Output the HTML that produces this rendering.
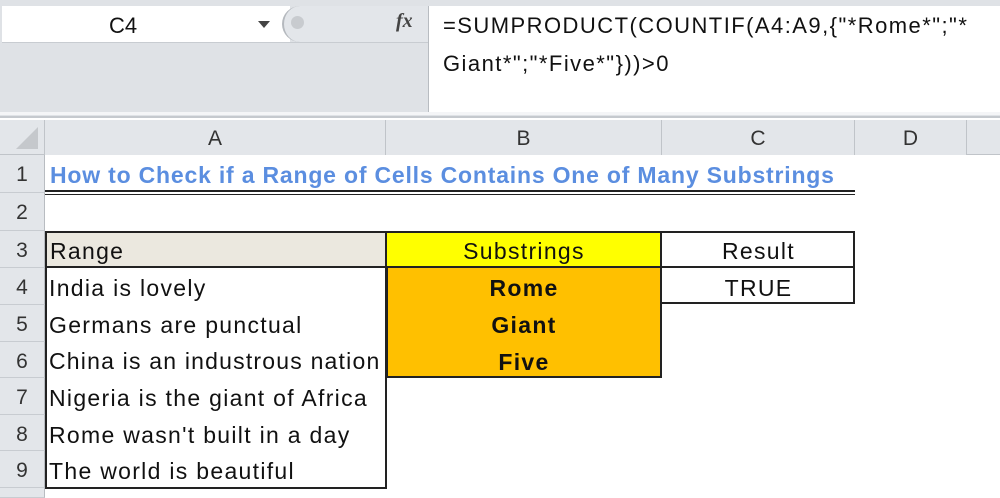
<!DOCTYPE html><html><head><style>
body{margin:0;width:1000px;height:494px;background:#fff;position:relative;overflow:hidden;font-family:"Liberation Sans",sans-serif;color:#111}
div{position:absolute;box-sizing:border-box}
.rh{left:0;width:45px;background:#e3e6ea;border-bottom:1px solid #c8ccd1;border-right:1px solid #b8bcc1;text-align:center;font-size:21px;color:#333;line-height:40px}
.ch{top:120px;height:35px;background:#e3e6ea;border-right:1px solid #c0c4c9;text-align:center;font-size:21px;color:#333;line-height:37px}
.t{font-size:23px;line-height:40px;white-space:nowrap;letter-spacing:1.3px}
</style></head><body>
<div style="left:0;top:0;width:1000px;height:118px;background:#dfe2e6;border-bottom:2px solid #c5c9ce"></div>
<div style="left:0;top:112px;width:1000px;height:3px;background:#f4f5f7"></div>
<div style="left:2px;top:6px;width:288px;height:36px;background:#fff"></div>
<div style="left:98px;top:6px;width:50px;height:36px;font-size:22px;line-height:40px;text-align:center">C4</div>
<div style="left:258px;top:21px;width:0;height:0;border-left:6px solid transparent;border-right:6px solid transparent;border-top:7px solid #444"></div>
<div style="left:282px;top:6px;width:146px;height:36px;background:#e3e6ea;border-radius:18px 0 0 18px;border-left:2px solid #b5b9be"></div>
<div style="left:291px;top:16px;width:13px;height:13px;border-radius:50%;background:#c8cbcf"></div>
<div style="left:396px;top:10px;font-family:'Liberation Serif',serif;font-style:italic;font-weight:bold;font-size:20px;color:#444">fx</div>
<div style="left:2px;top:42px;width:426px;height:70px;border-top:1px solid #c8ccd1"></div>
<div style="left:428px;top:6px;width:572px;height:106px;background:#fff;border-left:1px solid #b8bcc1"></div>
<div style="left:443px;top:7px;font-size:22px;line-height:38px;color:#111;letter-spacing:1.45px;white-space:nowrap">=SUMPRODUCT(COUNTIF(A4:A9,{"*Rome*";"*<br>Giant*";"*Five*"}))&gt;0</div>
<div style="left:0;top:120px;width:1000px;height:35px;background:#e3e6ea;border-bottom:1px solid #c0c4c9"></div>
<div style="left:0;top:120px;width:45px;height:35px;border-right:1px solid #c0c4c9"></div>
<div style="left:16px;top:127px;width:0;height:0;border-left:22px solid transparent;border-bottom:22px solid #c5c8cc"></div>
<div class="ch" style="left:45px;width:341px">A</div>
<div class="ch" style="left:386px;width:276px">B</div>
<div class="ch" style="left:662px;width:193px">C</div>
<div class="ch" style="left:855px;width:112px">D</div>
<div class="rh" style="top:155px;height:38px">1</div>
<div class="rh" style="top:193px;height:38px">2</div>
<div class="rh" style="top:231px;height:37px">3</div>
<div class="rh" style="top:268px;height:37px">4</div>
<div class="rh" style="top:305px;height:37px">5</div>
<div class="rh" style="top:342px;height:36px">6</div>
<div class="rh" style="top:378px;height:37px">7</div>
<div class="rh" style="top:415px;height:36px">8</div>
<div class="rh" style="top:451px;height:37px">9</div>
<div class="rh" style="top:488px;height:10px"></div>
<div class="t" style="left:50px;top:155px;font-weight:bold;color:#5b8ee0;letter-spacing:0.8px">How to Check if a Range of Cells Contains One of Many Substrings</div>
<div style="left:45px;top:190px;width:810px;height:5px;border-top:2px solid #222;border-bottom:1px solid #222"></div>
<div style="left:45px;top:231px;width:341px;height:37px;background:#ebe8df;border:2px solid #222;border-right:1px solid #222"></div>
<div style="left:386px;top:231px;width:276px;height:37px;background:#ffff00;border:2px solid #222;border-left:1px solid #222"></div>
<div style="left:661px;top:231px;width:194px;height:37px;border:2px solid #222;border-left:1px solid #222"></div>
<div style="left:661px;top:266px;width:194px;height:38px;border:2px solid #222;border-left:1px solid #222"></div>
<div style="left:386px;top:266px;width:276px;height:112px;background:#ffc000;border:2px solid #222"></div>
<div style="left:45px;top:266px;width:342px;height:223px;border:2px solid #222"></div>
<div class="t" style="left:50px;top:231px">Range</div>
<div class="t" style="left:386px;top:231px;width:276px;text-align:center">Substrings</div>
<div class="t" style="left:662px;top:231px;width:193px;text-align:center">Result</div>
<div class="t" style="left:662px;top:268px;width:193px;text-align:center">TRUE</div>
<div class="t" style="left:386px;top:268px;width:276px;text-align:center;font-weight:bold">Rome</div>
<div class="t" style="left:386px;top:305px;width:276px;text-align:center;font-weight:bold">Giant</div>
<div class="t" style="left:386px;top:342px;width:276px;text-align:center;font-weight:bold">Five</div>
<div class="t" style="left:49px;top:268px">India is lovely</div>
<div class="t" style="left:49px;top:305px">Germans are punctual</div>
<div class="t" style="left:49px;top:341px;letter-spacing:1.2px">China is an industrous nation</div>
<div class="t" style="left:49px;top:378px">Nigeria is the giant of Africa</div>
<div class="t" style="left:49px;top:415px">Rome wasn't built in a day</div>
<div class="t" style="left:49px;top:451px">The world is beautiful</div>
</body></html>
